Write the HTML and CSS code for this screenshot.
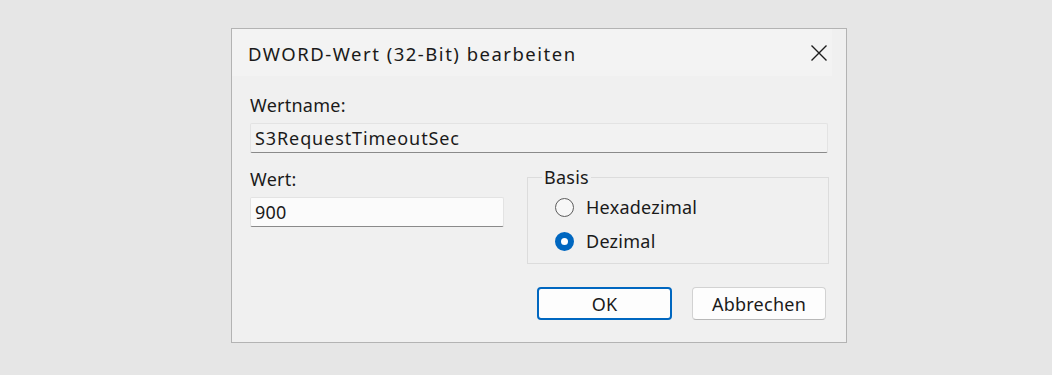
FILE: index.html
```html
<!DOCTYPE html>
<html lang="de">
<head>
    <meta charset="UTF-8">
    <title>DWORD-Wert (32-Bit) bearbeiten</title>
    <link rel="stylesheet" href="styles.css">
</head>
<body>
    <div class="dialog">
        <div class="titlebar">
            <span class="title">DWORD-Wert (32-Bit) bearbeiten</span>
            <svg class="close" width="18" height="18" viewBox="0 0 18 18">
                <path d="M1.5 1.5 L16.5 16.5 M16.5 1.5 L1.5 16.5" stroke="#1c1c1c" stroke-width="1.4" fill="none"/>
            </svg>
        </div>
        <div class="content">
            <div class="label label-name">Wertname:</div>
            <div class="field field-readonly">S3RequestTimeoutSec</div>

            <div class="row">
                <div class="value-col">
                    <div class="label label-value">Wert:</div>
                    <div class="field field-edit">900</div>
                </div>
                <fieldset class="basis">
                    <legend>Basis</legend>
                    <div class="radio">
                        <span class="dot"></span>
                        <span>Hexadezimal</span>
                    </div>
                    <div class="radio">
                        <span class="dot checked"></span>
                        <span>Dezimal</span>
                    </div>
                </fieldset>
            </div>

            <div class="buttons">
                <button class="btn btn-default">OK</button>
                <button class="btn">Abbrechen</button>
            </div>
        </div>
    </div>
</body>
</html>
```

FILE: styles.css
```css
/* Page */
body {
    margin: 0;
    padding: 28px 0 0 231px;
    background: #e6e6e6;
    font-family: 'Noto Sans', sans-serif;
    font-size: 18px;
    letter-spacing: 0.25px;
    color: #1a1a1a;
}

/* Dialog window */
.dialog {
    box-sizing: border-box;
    width: 616px;
    height: 315px;
    background: #f0f0f0;
    border: 1px solid #b3b3b3;
}

.titlebar {
    height: 47px;
    margin-right: 14px;
    background: #f3f3f3;
    display: flex;
    align-items: center;
    justify-content: space-between;
    padding-left: 16px;
}

.title {
    font-size: 18.5px;
    letter-spacing: 1.5px;
    margin-top: 1px;
}

.close {
    margin-right: 4px;
}

/* Content */
.content {
    padding: 0 18px;
}

.label {
    line-height: 20px;
}

.label-name {
    margin-top: 19px;
}

.field {
    box-sizing: border-box;
    height: 30px;
    display: flex;
    align-items: center;
    padding-left: 4px;
    border: 1px solid #e3e3e3;
    border-bottom: 1px solid #8a8a8a;
    border-radius: 2px;
}

.field-readonly {
    margin-top: 8px;
    background: #f2f2f2;
    letter-spacing: 0.9px;
}

.field-edit {
    margin-top: 8px;
    width: 254px;
    background: #fbfbfb;
}

.row {
    display: flex;
    justify-content: space-between;
    margin-top: 14px;
}

.label-value {
    margin-top: 2px;
}

/* Group box */
.basis {
    box-sizing: border-box;
    width: 302px;
    margin: 0 -1px 0 0;
    padding: 8px 14px 10px 14px;
    border: 1px solid #dcdcdc;
}

.basis legend {
    padding: 0 2px;
    line-height: 20px;
}

.radio {
    height: 24px;
    display: flex;
    align-items: center;
    padding-left: 13px;
}

.radio + .radio {
    margin-top: 10px;
}

.dot {
    box-sizing: border-box;
    width: 19px;
    height: 19px;
    border-radius: 50%;
    border: 1.5px solid #5c5c5c;
    background: #f7f7f7;
    margin-right: 12px;
}

.dot.checked {
    border: 6px solid #0067c0;
    background: #ffffff;
}

/* Buttons */
.buttons {
    display: flex;
    justify-content: flex-end;
    gap: 20px;
    margin-top: 23px;
    padding-right: 2px;
}

.btn {
    box-sizing: border-box;
    width: 134px;
    height: 33px;
    font-family: inherit;
    font-size: 18px;
    letter-spacing: 0.25px;
    color: #1a1a1a;
    background: #fdfdfd;
    border: 1px solid #d2d2d2;
    border-bottom-color: #b8b8b8;
    border-radius: 4px;
}

.btn-default {
    width: 135px;
    border: 2px solid #0067c0;
}
```
